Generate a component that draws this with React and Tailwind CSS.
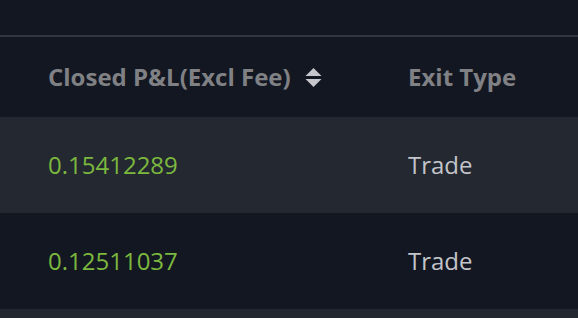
export default function App() {
  const rows = [
    { pnl: '0.15412289', type: 'Trade' },
    { pnl: '0.12511037', type: 'Trade' },
    { pnl: '', type: '' },
  ]

  return (
    <div className="w-[578px] h-[318px] overflow-hidden bg-[#131722]" style={{ fontFamily: '"Open Sans", sans-serif' }}>
      <div className="h-[35px]" />
      <div className="h-[2px] bg-[#33363f]" />
      <div className="flex h-[80px] items-center text-[24px] font-bold text-[#808184]">
        <div className="w-[408px] pl-[48px] flex items-center gap-[14px]">
          <span>Closed P&amp;L(Excl Fee)</span>
          <svg width="17" height="19" viewBox="0 0 17 19" className="mt-[1px]">
            <path d="M8.5 0 L16.5 8 L0.5 8 Z" fill="#c5c7cc" />
            <path d="M8.5 19 L16.5 11 L0.5 11 Z" fill="#c5c7cc" />
          </svg>
        </div>
        <div>Exit Type</div>
      </div>
      {rows.map((r, i) => (
        <div
          key={i}
          className={`flex h-[96px] items-center text-[24px] ${i % 2 === 0 ? 'bg-[#242831]' : 'bg-[#131722]'}`}
        >
          <div className="w-[408px] pl-[48px] text-[#7cb83e]">{r.pnl}</div>
          <div className="text-[#c3c5ca]">{r.type}</div>
        </div>
      ))}
    </div>
  )
}
